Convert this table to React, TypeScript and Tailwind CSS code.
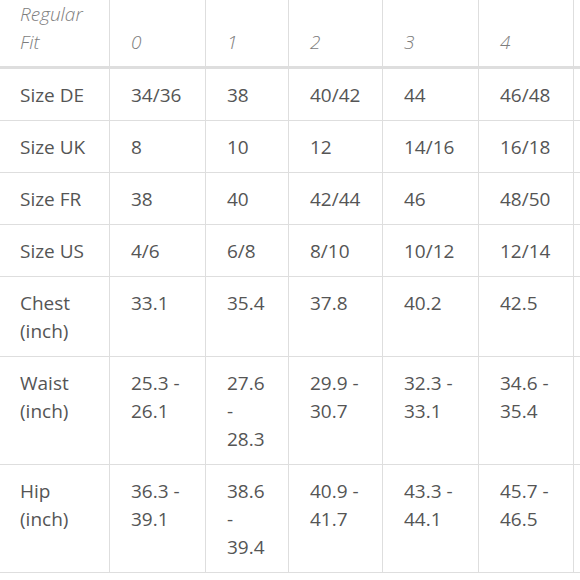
const HEAD = ['0', '1', '2', '3', '4', '']

const ROWS: string[][] = [
  ['Size DE', '34/36', '38', '40/42', '44', '46/48', ''],
  ['Size UK', '8', '10', '12', '14/16', '16/18', ''],
  ['Size FR', '38', '40', '42/44', '46', '48/50', ''],
  ['Size US', '4/6', '6/8', '8/10', '10/12', '12/14', ''],
  ['Chest (inch)', '33.1', '35.4', '37.8', '40.2', '42.5', ''],
  ['Waist (inch)', '25.3 - 26.1', '27.6 - 28.3', '29.9 - 30.7', '32.3 - 33.1', '34.6 - 35.4', ''],
  ['Hip (inch)', '36.3 - 39.1', '38.6 - 39.4', '40.9 - 41.7', '43.3 - 44.1', '45.7 - 46.5', ''],
]

const WIDTHS = ['w-[110px]', 'w-[96px]', 'w-[83px]', 'w-[94px]', 'w-[96px]', 'w-[95px]', 'w-[20px]']

export default function App() {
  return (
    <div
      className="h-[580px] w-[580px] overflow-hidden bg-white text-[19px] leading-[28px] text-[#555]"
      style={{ fontFamily: '"Open Sans", Arial, sans-serif' }}
    >
      <table className="w-[594px] table-fixed border-separate border-spacing-0">
        <colgroup>
          {WIDTHS.map((w, i) => (
            <col key={i} className={w} />
          ))}
        </colgroup>
        <thead>
          <tr>
            <th className="border-r border-b-[3px] border-[#dedede] pl-5 pr-4 pt-0 pb-[10px] text-left align-bottom font-light italic text-[#7d7d7d]">
              Regular Fit
            </th>
            {HEAD.map((h, i) => (
              <th
                key={i}
                className="border-r border-b-[3px] border-[#dedede] pl-[21px] pr-4 pt-0 pb-[10px] text-left align-bottom font-light italic text-[#7d7d7d]"
              >
                {h}
              </th>
            ))}
          </tr>
        </thead>
        <tbody>
          {ROWS.map((row) => (
            <tr key={row[0]}>
              {row.map((cell, i) => (
                <td
                  key={i}
                  className={`border-r border-b border-[#dedede] ${i === 0 ? 'pl-5' : 'pl-[21px]'} pr-[18px] pt-3 pb-[11px] text-left align-top break-words`}
                >
                  {cell}
                </td>
              ))}
            </tr>
          ))}
        </tbody>
      </table>
    </div>
  )
}
